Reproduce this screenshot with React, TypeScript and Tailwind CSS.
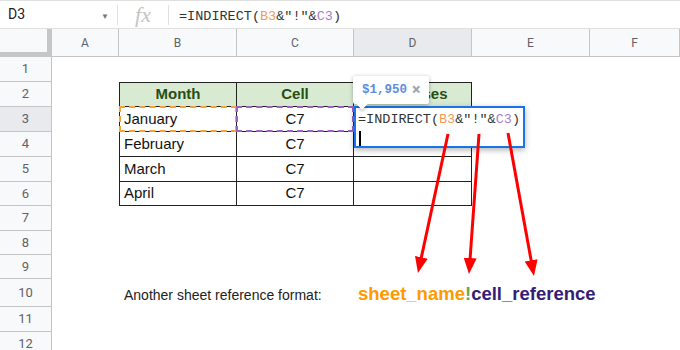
import React from 'react';

const SANS = "font-['Liberation_Sans',Arial,sans-serif]";
const MONO = "font-['Liberation_Mono','DejaVu_Sans_Mono',monospace]";

// column widths of the sheet, A..F
const columns = [
  { key: 'A', width: 'w-[67px]' },
  { key: 'B', width: 'w-[118px]' },
  { key: 'C', width: 'w-[117px]' },
  { key: 'D', width: 'w-[118px]' },
  { key: 'E', width: 'w-[118px]' },
  { key: 'F', width: 'w-[90px]' },
];

const rowHeights: Record<number, string> = {
  1: 'h-[25px]',
  2: 'h-[25px]',
  3: 'h-[25px]',
  4: 'h-[25px]',
  5: 'h-[25px]',
  6: 'h-[24px]',
  7: 'h-[25px]',
  8: 'h-[24px]',
  9: 'h-[24px]',
  10: 'h-[28px]',
  11: 'h-[25px]',
  12: 'h-[25px]',
};

const months = ['January', 'February', 'March', 'April'];

function FormulaText() {
  return (
    <span className={`${MONO} text-[13.5px] text-[#333] whitespace-nowrap`}>
      =INDIRECT(<span className="text-[#f29b55]">B3</span>&amp;"!"&amp;<span className="text-[#a57fcb]">C3</span>)
    </span>
  );
}

function FormulaBar() {
  return (
    <div className="flex items-center h-[29px] border-t border-b border-[#e0e0e0] bg-white">
      <div className="flex items-center justify-between w-[117px] pl-[8px] pr-[8px]">
        <span className="font-['Roboto',sans-serif] text-[14px] text-[#222]">D3</span>
        <span className="text-[8px] text-[#777] mt-[2px]">▼</span>
      </div>
      <div className="w-px h-[20px] bg-[#e0e0e0]" />
      <div className="w-[50px] flex justify-center">
        <span className="font-['Liberation_Serif',serif] italic text-[22px] leading-none text-[#c4c4c4]">fx</span>
      </div>
      <div className="w-px h-[20px] bg-[#e0e0e0]" />
      <div className="pl-[10px]">
        <FormulaText />
      </div>
    </div>
  );
}

function ColumnHeaders() {
  return (
    <div className="flex h-[28px]">
      <div className="w-[52px] h-[28px] bg-[#f8f9fa] border-r-[5px] border-b-[5px] border-[#c6c6c6]" />
      {columns.map((c) => (
        <div
          key={c.key}
          className={`${c.width} shrink-0 flex items-center justify-center border-r border-b border-[#c4c4c4] font-['Roboto',sans-serif] text-[12px] text-[#5f6368] ${
            c.key === 'D' ? 'bg-[#e8eaed]' : 'bg-[#f8f9fa]'
          }`}
        >
          {c.key}
        </div>
      ))}
    </div>
  );
}

function TableCell({ row, col }: { row: number; col: string }) {
  const isHeader = row === 2;
  const topBorder = isHeader ? 'border-t' : '';
  const leftBorder = col === 'B' ? 'border-l' : '';
  let content: React.ReactNode = null;

  if (isHeader) {
    content = col === 'B' ? 'Month' : col === 'C' ? 'Cell' : 'Expenses';
  } else if (col === 'B') {
    content = months[row - 3];
  } else if (col === 'C') {
    content = 'C7';
  }

  return (
    <div
      className={`relative h-full flex items-center border-r border-b border-[#222] ${topBorder} ${leftBorder} ${
        isHeader ? 'bg-[#d9ead3] justify-center font-bold text-[#274e13]' : 'text-[#111]'
      } ${!isHeader && col === 'B' ? 'pl-[4px]' : ''} ${!isHeader && col === 'C' ? 'justify-center' : ''} ${SANS} text-[15px]`}
    >
      {content}
      {row === 3 && col === 'B' && (
        <div className="absolute inset-[-1px] border-2 border-dashed border-[#f5a23a]" />
      )}
      {row === 3 && col === 'C' && (
        <div className="absolute inset-[-1px] border-2 border-dashed border-[#9d62c4]" />
      )}
      {row === 3 && col === 'D' && <CellEditor />}
      {row === 2 && col === 'D' && <ValueTooltip />}
    </div>
  );
}

function CellEditor() {
  return (
    <div className="absolute left-0 top-[-1px] z-10 w-[171px] h-[42px] bg-white border-2 border-[#1a73e8] shadow-[0_2px_6px_rgba(0,0,0,0.3)] px-[2px] pt-[2px]">
      <div className="h-[20px] flex items-center leading-none">
        <FormulaText />
      </div>
      <div className="w-[1.5px] h-[15px] bg-black ml-[1px] mt-[1px]" />
    </div>
  );
}

function ValueTooltip() {
  return (
    <div className="absolute left-[-1px] top-[-7px] z-20 w-[76px] h-[28px] bg-white rounded-[2px] shadow-[0_1px_4px_rgba(0,0,0,0.3)] flex items-center pl-[9px] gap-[5px]">
      <span className={`${MONO} text-[12.5px] text-[#5b8ee0]`}>$1,950</span>
      <span className="font-['Roboto',sans-serif] text-[16px] leading-none text-[#a0a4a8]">×</span>
      <div className="absolute left-[5px] bottom-[-4px] w-[8px] h-[8px] bg-white rotate-45 shadow-[2px_2px_2px_rgba(0,0,0,0.15)]" />
    </div>
  );
}

function BodyRow({ row }: { row: number }) {
  const inTable = row >= 2 && row <= 6;
  return (
    <div className={`flex ${rowHeights[row]}`}>
      <div
        className={`w-[52px] shrink-0 flex items-center justify-center border-r border-b border-[#c4c4c4] font-['Roboto',sans-serif] text-[13px] text-[#5f6368] ${
          row === 3 ? 'bg-[#e8eaed]' : 'bg-[#f8f9fa]'
        }`}
      >
        {row}
      </div>
      {columns.map((c) => (
        <div key={c.key} className={`${c.width} shrink-0 h-full`}>
          {inTable && ['B', 'C', 'D'].includes(c.key) && <TableCell row={row} col={c.key} />}
          {row === 10 && c.key === 'B' && (
            <div className={`h-full flex items-center pl-[5px] pt-[4px] whitespace-nowrap ${SANS} text-[14px] text-[#222]`}>
              Another sheet reference format:
            </div>
          )}
          {row === 10 && c.key === 'D' && (
            <div className={`h-full flex items-center pl-[4px] pt-[1px] whitespace-nowrap ${SANS} font-bold text-[18.5px]`}>
              <span className="text-[#ff9900]">sheet_name</span>
              <span className="text-[#6aa84f]">!</span>
              <span className="text-[#351c75]">cell_reference</span>
            </div>
          )}
        </div>
      ))}
    </div>
  );
}

function Arrows() {
  const lines = [
    { x1: 448, y1: 134, x2: 420.1, y2: 263.2 },
    { x1: 479, y1: 134, x2: 469.7, y2: 264 },
    { x1: 508, y1: 133, x2: 532.2, y2: 266.2 },
  ];
  return (
    <svg className="absolute left-0 top-0 z-30 pointer-events-none" width={680} height={350}>
      <defs>
        <marker id="head" markerUnits="userSpaceOnUse" markerWidth={16} markerHeight={13} refX={6} refY={6.5} orient="auto">
          <path d="M0,0 L16,6.5 L0,13 z" fill="#ff0000" />
        </marker>
      </defs>
      {lines.map((l, i) => (
        <line key={i} {...l} stroke="#ff0000" strokeWidth={3} markerEnd="url(#head)" />
      ))}
    </svg>
  );
}

export default function App() {
  return (
    <div className="relative w-[680px] h-[350px] overflow-hidden bg-white">
      <FormulaBar />
      <ColumnHeaders />
      {Array.from({ length: 12 }, (_, i) => (
        <BodyRow key={i} row={i + 1} />
      ))}
      <Arrows />
    </div>
  );
}
